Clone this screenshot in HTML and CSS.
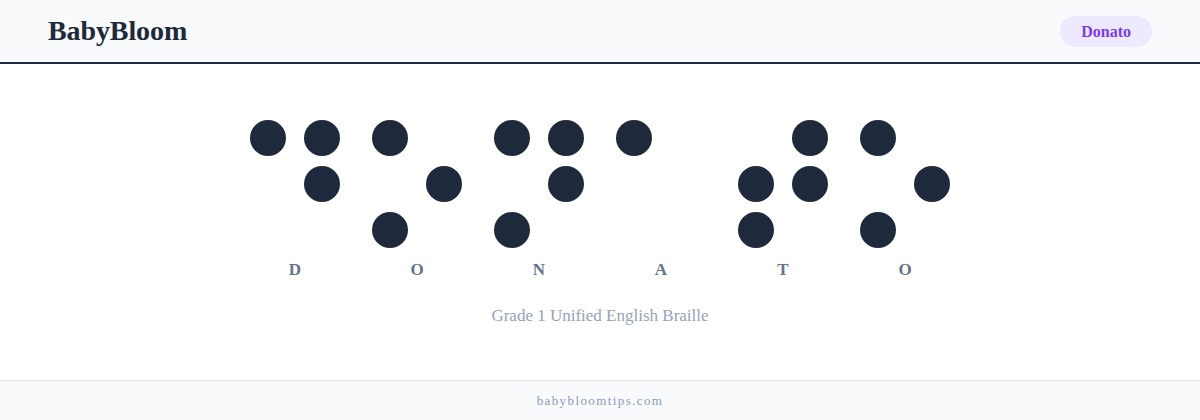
FILE: index.html
```html
<!DOCTYPE html>
<html lang="en">
<head>
    <meta charset="UTF-8">
    <meta name="viewport" content="width=device-width, initial-scale=1.0">
    <title>BabyBloom - Donato in Braille</title>
    <link rel="stylesheet" href="styles.css">
</head>
<body>
    <header class="site-header">
        <div class="logo">BabyBloom</div>
        <span class="name-pill">Donato</span>
    </header>

    <main class="braille-wrap">
        <div class="braille-word">
            <div class="cell">
                <div class="dots">
                    <span class="dot on"></span><span class="dot on"></span>
                    <span class="dot"></span><span class="dot on"></span>
                    <span class="dot"></span><span class="dot"></span>
                </div>
                <div class="letter">D</div>
            </div>
            <div class="cell">
                <div class="dots">
                    <span class="dot on"></span><span class="dot"></span>
                    <span class="dot"></span><span class="dot on"></span>
                    <span class="dot on"></span><span class="dot"></span>
                </div>
                <div class="letter">O</div>
            </div>
            <div class="cell">
                <div class="dots">
                    <span class="dot on"></span><span class="dot on"></span>
                    <span class="dot"></span><span class="dot on"></span>
                    <span class="dot on"></span><span class="dot"></span>
                </div>
                <div class="letter">N</div>
            </div>
            <div class="cell">
                <div class="dots">
                    <span class="dot on"></span><span class="dot"></span>
                    <span class="dot"></span><span class="dot"></span>
                    <span class="dot"></span><span class="dot"></span>
                </div>
                <div class="letter">A</div>
            </div>
            <div class="cell">
                <div class="dots">
                    <span class="dot"></span><span class="dot on"></span>
                    <span class="dot on"></span><span class="dot on"></span>
                    <span class="dot on"></span><span class="dot"></span>
                </div>
                <div class="letter">T</div>
            </div>
            <div class="cell">
                <div class="dots">
                    <span class="dot on"></span><span class="dot"></span>
                    <span class="dot"></span><span class="dot on"></span>
                    <span class="dot on"></span><span class="dot"></span>
                </div>
                <div class="letter">O</div>
            </div>
        </div>
        <p class="caption">Grade 1 Unified English Braille</p>
    </main>

    <footer class="site-footer">babybloomtips.com</footer>
</body>
</html>
```

FILE: styles.css
```css
html, body {
    margin: 0;
    padding: 0;
    height: 100%;
}

body {
    display: flex;
    flex-direction: column;
    font-family: 'Liberation Serif', 'DejaVu Serif', serif;
    background-color: #fff;
    color: #1e293b;
}

.site-header {
    display: flex;
    align-items: center;
    justify-content: space-between;
    height: 62px;
    padding: 0 48px;
    background-color: #f8fafc;
    border-bottom: 2px solid #1e293b;
}

.logo {
    font-size: 28px;
    font-weight: 700;
    color: #1e293b;
    letter-spacing: -0.1px;
}

.name-pill {
    display: inline-block;
    height: 31px;
    line-height: 31px;
    padding: 0 21px;
    border-radius: 16px;
    background-color: #ede9fe;
    color: #7c3aed;
    font-size: 16px;
    font-weight: 600;
}

.braille-wrap {
    flex: 1;
    display: flex;
    flex-direction: column;
    align-items: center;
    padding-top: 56px;
}

.braille-word {
    display: flex;
    gap: 32px;
}

.cell {
    display: flex;
    flex-direction: column;
    align-items: center;
}

.dots {
    display: grid;
    grid-template-columns: 36px 36px;
    grid-auto-rows: 36px;
    column-gap: 18px;
    row-gap: 10px;
}

.dot {
    width: 36px;
    height: 36px;
    border-radius: 50%;
}

.dot.on {
    background-color: #1e293b;
}

.letter {
    margin-top: 10px;
    font-size: 17px;
    font-weight: 600;
    line-height: 24px;
    color: #64748b;
}

.caption {
    margin: 24px 0 0;
    font-size: 17px;
    color: #94a3b8;
}

.site-footer {
    height: 39px;
    line-height: 39px;
    text-align: center;
    background-color: #f8fafc;
    border-top: 1px solid #e2e8f0;
    font-size: 13px;
    letter-spacing: 1.4px;
    color: #8a9ab4;
}
```
